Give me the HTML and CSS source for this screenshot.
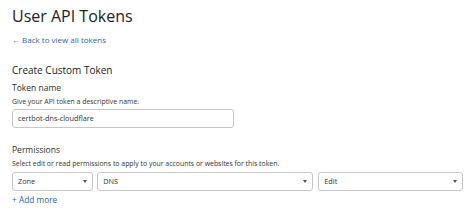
FILE: index.html
```html
<!DOCTYPE html>
<html lang="en">
<head>
    <meta charset="UTF-8" />
    <title>User API Tokens</title>
    <link rel="stylesheet" href="styles.css">
</head>
<body>
    <h1>User API Tokens</h1>
    <a class="back" href="#">&larr; Back to view all tokens</a>

    <section class="form">
        <h2>Create Custom Token</h2>

        <div class="field">
            <label>Token name</label>
            <p class="hint">Give your API token a descriptive name.</p>
            <div class="input">certbot-dns-cloudflare</div>
        </div>

        <div class="field perms">
            <label>Permissions</label>
            <p class="hint">Select edit or read permissions to apply to your accounts or websites for this token.</p>
            <div class="row">
                <div class="select zone">Zone <span class="caret"></span></div>
                <div class="select type">DNS <span class="caret"></span></div>
                <div class="select level">Edit <span class="caret"></span></div>
            </div>
            <a class="add" href="#">+ Add more</a>
        </div>
    </section>
</body>
</html>
```

FILE: styles.css
```css
body {
    font-family: "Open Sans", "Noto Sans", sans-serif;
    background: #fff;
    margin: 0;
    padding: 4px 11px 0 12px;
    color: #313131;
}
h1 {
    font-size: 16px;
    font-weight: 400;
    margin: 0;
    line-height: 24px;
    color: #222;
}
.back {
    display: block;
    margin-top: 6px;
    font-size: 8px;
    line-height: 12px;
    color: #2c5fbd;
    text-decoration: none;
}
h2 {
    font-size: 10px;
    font-weight: 400;
    margin: 16px 0 0;
    line-height: 16px;
    color: #222;
}
.field label {
    display: block;
    font-size: 8.5px;
    line-height: 12px;
    margin-top: 4px;
}
.hint {
    font-size: 6.9px;
    line-height: 11px;
    margin: 2px 0 2px;
    color: #333;
}
.input {
    width: 210px;
    height: 17px;
    border: 1px solid #c8c8c8;
    border-radius: 3px;
    padding: 0 5px;
    font-size: 7.3px;
    line-height: 17px;
}
.perms {
    margin-top: 16px;
}
.perms .hint {
    margin-bottom: 3px;
}
.row {
    display: flex;
    gap: 4px;
}
.select {
    position: relative;
    height: 17px;
    border: 1px solid #c8c8c8;
    border-radius: 3px;
    padding: 0 5px;
    font-size: 7.3px;
    line-height: 17px;
}
.zone { width: 70px; }
.type { width: 206px; }
.level { width: 134px; margin-left: 1px; }
.caret {
    position: absolute;
    right: 5px;
    top: 7px;
    border-left: 2.5px solid transparent;
    border-right: 2.5px solid transparent;
    border-top: 3px solid #555;
}
.add {
    display: block;
    margin-top: 2px;
    font-size: 8.3px;
    line-height: 14px;
    color: #2c5fbd;
    text-decoration: none;
}
```
